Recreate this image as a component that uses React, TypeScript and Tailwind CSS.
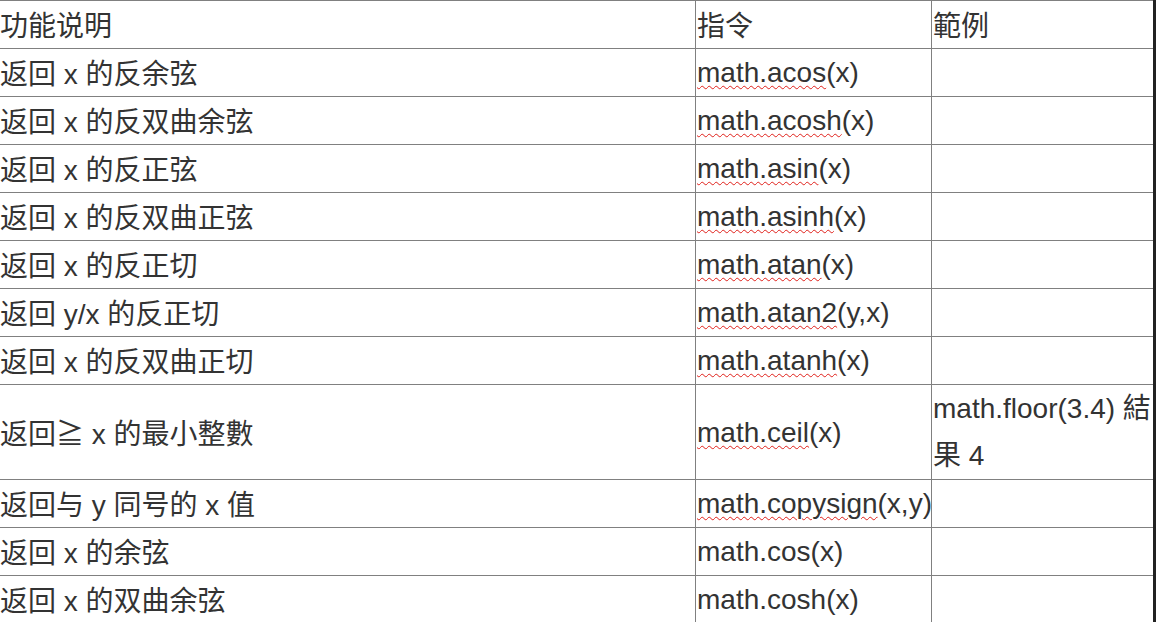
type Row = {
  desc: string;
  fn: string;
  args: string;
  squiggle: boolean;
  example?: string;
};

const rows: Row[] = [
  { desc: "返回 x 的反余弦", fn: "math.acos", args: "(x)", squiggle: true },
  { desc: "返回 x 的反双曲余弦", fn: "math.acosh", args: "(x)", squiggle: true },
  { desc: "返回 x 的反正弦", fn: "math.asin", args: "(x)", squiggle: true },
  { desc: "返回 x 的反双曲正弦", fn: "math.asinh", args: "(x)", squiggle: true },
  { desc: "返回 x 的反正切", fn: "math.atan", args: "(x)", squiggle: true },
  { desc: "返回 y/x 的反正切", fn: "math.atan2", args: "(y,x)", squiggle: true },
  { desc: "返回 x 的反双曲正切", fn: "math.atanh", args: "(x)", squiggle: true },
  {
    desc: "返回≧ x 的最小整數",
    fn: "math.ceil",
    args: "(x)",
    squiggle: true,
    example: "math.floor(3.4) 結果 4",
  },
  { desc: "返回与 y 同号的 x 值", fn: "math.copysign", args: "(x,y)", squiggle: true },
  { desc: "返回 x 的余弦", fn: "math.cos", args: "(x)", squiggle: false },
  { desc: "返回 x 的双曲余弦", fn: "math.cosh", args: "(x)", squiggle: false },
];

function Cell({
  className = "",
  children,
}: {
  className?: string;
  children?: React.ReactNode;
}) {
  return <div className={`flex items-center ${className}`}>{children}</div>;
}

// CJK glyphs sit a touch high in Noto vs. the original font
function Cjk({ children }: { children: React.ReactNode }) {
  return <span className="relative top-[2px]">{children}</span>;
}

export default function App() {
  return (
    <div className="h-[622px] w-[1156px] overflow-hidden border-r-[3px] border-r-[#222] bg-white font-['Liberation_Sans','Noto_Sans_CJK_SC',sans-serif] text-[28px] leading-[47px] text-[#333]">
      <div className="flex border-t border-[#808080]">
        <Cell className="w-[695px]">
          <Cjk>功能说明</Cjk>
        </Cell>
        <Cell className="w-[236px] border-l border-[#808080] pl-px">
          <Cjk>指令</Cjk>
        </Cell>
        <Cell className="w-[222px] border-l border-[#808080] pl-px">
          <Cjk>範例</Cjk>
        </Cell>
      </div>
      {rows.map((r) => (
        <div key={r.fn} className="flex border-t border-[#808080]">
          <Cell className="w-[695px]">
            <Cjk>{r.desc}</Cjk>
          </Cell>
          <Cell className="w-[236px] border-l border-[#808080] pl-px whitespace-nowrap">
            <span>
              <span
                className={
                  r.squiggle
                    ? "underline decoration-[#e0201a] decoration-wavy decoration-1 underline-offset-[3px]"
                    : ""
                }
              >
                {r.fn}
              </span>
              {r.args}
            </span>
          </Cell>
          <Cell className="w-[222px] border-l border-[#808080] pl-px">
            {r.example ? <span>{r.example}</span> : null}
          </Cell>
        </div>
      ))}
    </div>
  );
}
